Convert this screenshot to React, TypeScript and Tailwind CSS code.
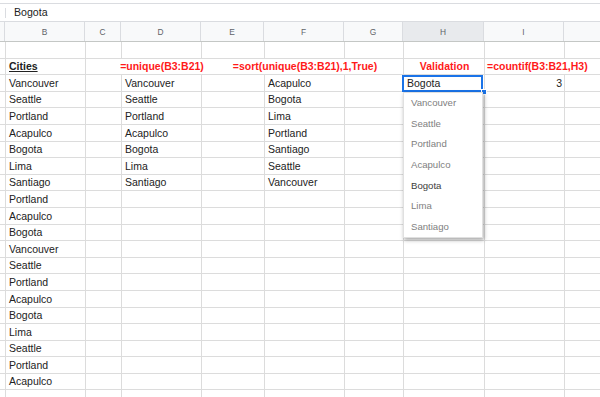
import React from "react";

const W = [
  "w-[5px]",
  "w-[80px]",
  "w-[36px]",
  "w-[80px]",
  "w-[63px]",
  "w-[80px]",
  "w-[59px]",
  "w-[81px]",
  "w-[80px]",
];

const colB = [
  "Vancouver", "Seattle", "Portland", "Acapulco", "Bogota", "Lima", "Santiago",
  "Portland", "Acapulco", "Bogota", "Vancouver", "Seattle", "Portland", "Acapulco",
  "Bogota", "Lima", "Seattle", "Portland", "Acapulco",
];
const colD = ["Vancouver", "Seattle", "Portland", "Acapulco", "Bogota", "Lima", "Santiago"];
const colF = ["Acapulco", "Bogota", "Lima", "Portland", "Santiago", "Seattle", "Vancouver"];
const menu = ["Vancouver", "Seattle", "Portland", "Acapulco", "Bogota", "Lima", "Santiago"];

function Cell({ w, children, className = "" }: { w: string; children?: React.ReactNode; className?: string }) {
  return (
    <div
      className={`${w} shrink-0 box-border h-full border-r border-b border-[#dcdcdc] flex items-end pb-[2px] pl-[3px] pr-[2px] whitespace-nowrap overflow-visible leading-[12px] ${className}`}
    >
      {children}
    </div>
  );
}

function Row({ cells }: { cells: React.ReactNode[] }) {
  return (
    <div className="flex h-[16.6px]">
      {W.map((w, i) => (
        <Cell key={i} w={w}>
          {cells[i]}
        </Cell>
      ))}
      <div className="flex-1 box-border h-full border-b border-[#dcdcdc]" />
    </div>
  );
}

export default function App() {
  const headers = ["", "B", "C", "D", "E", "F", "G", "H", "I"];
  const rows: React.ReactNode[][] = [];
  for (let r = 0; r < 19; r++) {
    const cells: React.ReactNode[] = [];
    cells[1] = colB[r];
    cells[3] = colD[r];
    cells[5] = colF[r];
    if (r === 0) {
      cells[7] = "Bogota";
      cells[8] = <span className="ml-auto">3</span>;
    }
    rows.push(cells);
  }

  return (
    <div className="relative w-[600px] h-[397px] overflow-hidden bg-white font-['Liberation_Sans',Arial,sans-serif] text-[10.5px] text-[#222]">
      {/* formula bar */}
      <div className="mt-[3px] h-[19px] box-border border-t border-b border-[#dadce0] flex items-center">
        <div className="ml-[5px] w-px h-[10px] bg-[#dadce0]" />
        <div className="ml-[8px] text-[10.6px] text-[#222]">Bogota</div>
      </div>

      {/* column headers */}
      <div className="flex h-[20px] bg-[#f8f9fa] box-border border-b border-[#c4c7c5]">
        {headers.map((h, i) => (
          <div
            key={i}
            className={`${W[i]} shrink-0 box-border h-full border-r border-[#dadce0] flex items-center justify-center pt-[1px] text-[8.4px] text-[#5f6368] ${
              h === "H" ? "bg-[#e8eaed] text-[#3c4043]" : ""
            }`}
          >
            {h}
          </div>
        ))}
        <div className="flex-1" />
      </div>

      {/* row 1 */}
      <Row cells={[]} />

      {/* row 2 */}
      <div className="flex h-[16.6px] font-bold leading-[12px]">
        <Cell w={W[0]} />
        <Cell w={W[1]}>
          <span className="underline underline-offset-[1px]">Cities</span>
        </Cell>
        <div className="w-[318px] shrink-0 box-border h-full border-r border-b border-[#dcdcdc] flex text-[#ff1a1a]">
          <div className="w-[36px] shrink-0" />
          <div className="w-[80px] shrink-0 flex items-end justify-center pb-[2px] whitespace-nowrap">=unique(B3:B21)</div>
          <div className="w-[63px] shrink-0" />
          <div className="w-[80px] shrink-0 flex items-end justify-center pb-[2px] whitespace-nowrap">
            =sort(unique(B3:B21),1,True)
          </div>
          <div className="w-[59px] shrink-0" />
        </div>
        <Cell w={W[7]} className="justify-center text-[#ff1a1a]">
          Validation
        </Cell>
        <div className="flex-1 box-border h-full border-b border-[#dcdcdc] flex items-end pb-[2px] pl-[2px] whitespace-nowrap text-[#ff1a1a]">
          =countif(B3:B21,H3)
        </div>
      </div>

      {rows.map((c, i) => (
        <Row key={i} cells={c} />
      ))}
      <Row cells={[]} />

      {/* selected cell H3 */}
      <div className="absolute left-[402px] top-[74.5px] w-[81px] h-[17px] box-border border-2 border-[#1a73e8]" />
      <div className="absolute left-[481px] top-[89px] w-[4px] h-[4px] bg-[#1a73e8] border border-white box-content" />

      {/* dropdown */}
      <div className="absolute left-[403px] top-[91.5px] w-[80px] h-[146px] bg-white pt-[0.5px] shadow-[1px_2px_4px_rgba(0,0,0,0.35)] border border-[#e0e0e0] box-border">
        {menu.map((m) => (
          <div
            key={m}
            className={`h-[20.67px] flex items-center pl-[7px] text-[9.6px] ${
              m === "Bogota" ? "text-[#3c3c3c]" : "text-[#808080]"
            }`}
          >
            {m}
          </div>
        ))}
      </div>
    </div>
  );
}
